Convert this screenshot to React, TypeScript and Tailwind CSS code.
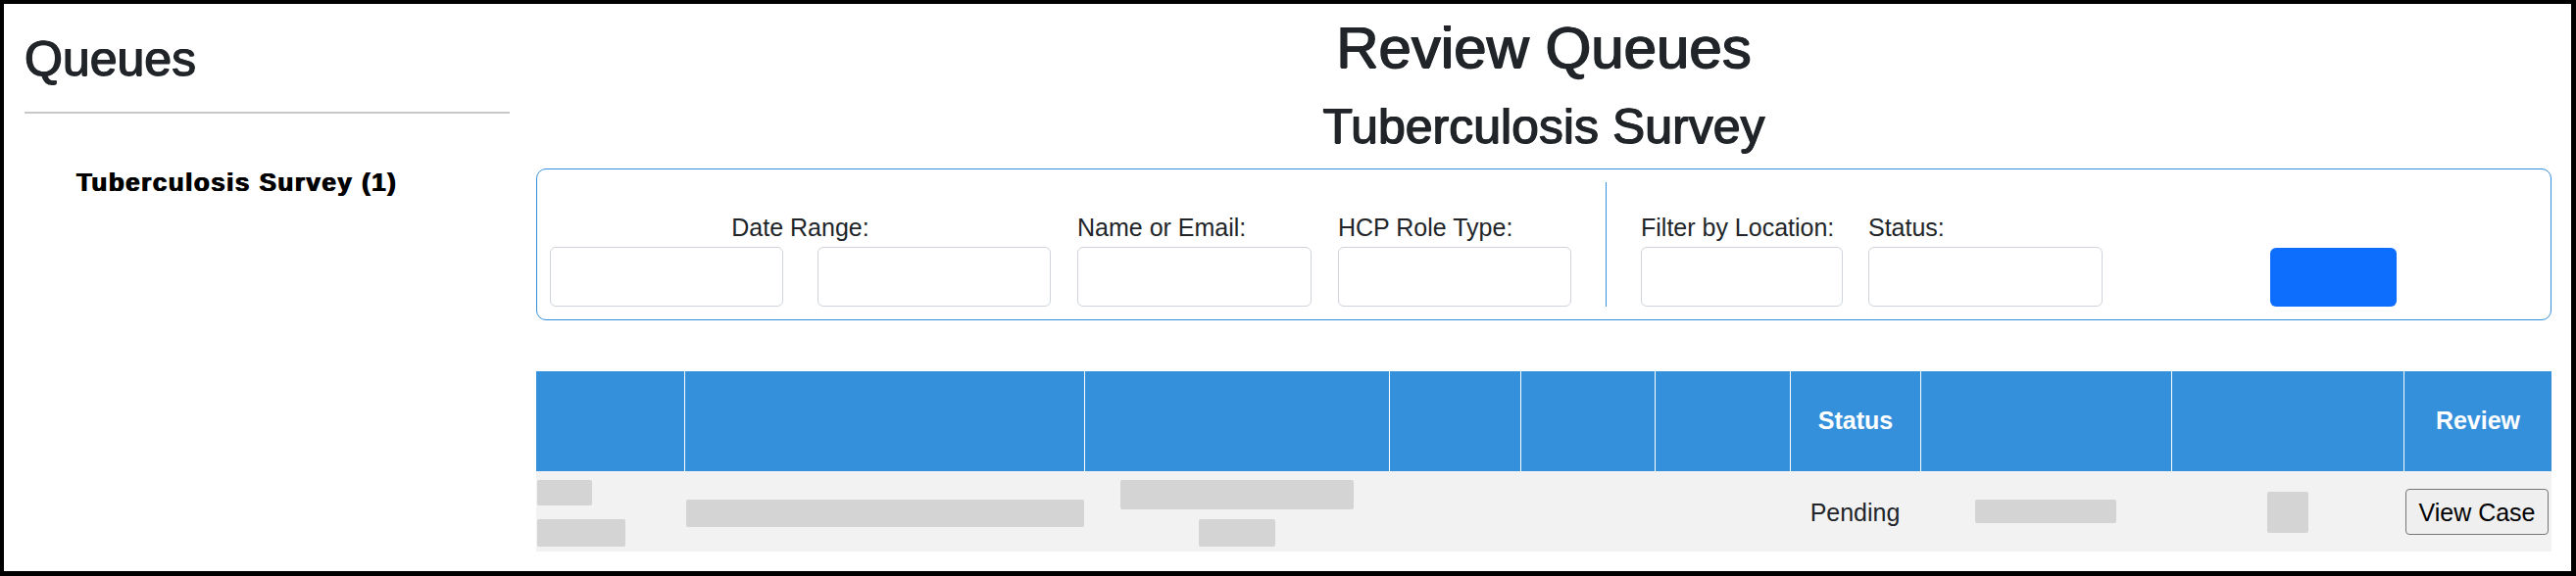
import React from "react";

const Bar = ({ w, h }: { w: string; h: string }) => (
  <div className={`${w} ${h} bg-[#d4d4d4] rounded-[2px]`} />
);

export default function App() {
  return (
    <div className="w-[2628px] h-[588px] bg-white border-black border-t-4 border-l-4 border-r-[5px] border-b-[5px] flex overflow-hidden font-['Liberation_Sans',Arial,sans-serif] text-[#212529]">
      {/* Sidebar */}
      <aside className="w-[522px] shrink-0 pl-[21px] pt-[26px]">
        <h3 className="text-[50px] leading-[60px] [text-shadow:0.7px_0_0_#212529,-0.7px_0_0_#212529,0_0.5px_0_#212529]">Queues</h3>
        <div className="mt-[24px] h-[2px] w-[495px] bg-[#c8c8c8]" />
        <div className="mt-[55px] ml-[53px] text-[26px] leading-[31px] font-bold tracking-[1.5px] text-black [text-shadow:0.6px_0_0_#000,-0.6px_0_0_#000]">
          Tuberculosis Survey (1)
        </div>
      </aside>

      {/* Main */}
      <main className="flex-1 pl-[21px] pr-[20px] pt-[9px]">
        <h1 className="text-center text-[60px] leading-[72px] [text-shadow:0.8px_0_0_#212529,-0.8px_0_0_#212529,0_0.5px_0_#212529]">Review Queues</h1>
        <h3 className="mt-[14px] text-center text-[50px] leading-[60px] [text-shadow:0.7px_0_0_#212529,-0.7px_0_0_#212529,0_0.5px_0_#212529]">Tuberculosis Survey</h3>

        {/* Filters */}
        <div className="mt-[13px] h-[155px] border border-[#3490dc] rounded-[10px] p-[13px] flex items-end text-[25px] leading-[30px]">
          <div className="flex flex-col">
            <label className="mb-[5px] text-center">Date Range:</label>
            <div className="flex gap-[35px]">
              <div className="w-[238px] h-[61px] border border-[#ced4da] rounded-[6px] bg-white" />
              <div className="w-[238px] h-[61px] border border-[#ced4da] rounded-[6px] bg-white" />
            </div>
          </div>
          <div className="ml-[27px] flex flex-col">
            <label className="mb-[5px]">Name or Email:</label>
            <div className="w-[239px] h-[61px] border border-[#ced4da] rounded-[6px] bg-white" />
          </div>
          <div className="ml-[27px] flex flex-col">
            <label className="mb-[5px]">HCP Role Type:</label>
            <div className="w-[238px] h-[61px] border border-[#ced4da] rounded-[6px] bg-white" />
          </div>
          <div className="self-stretch w-px mx-[35px] bg-[#3490dc]" />
          <div className="flex flex-col">
            <label className="mb-[5px] whitespace-nowrap">Filter by Location:</label>
            <div className="w-[206px] h-[61px] border border-[#ced4da] rounded-[6px] bg-white" />
          </div>
          <div className="ml-[26px] flex flex-col">
            <label className="mb-[5px]">Status:</label>
            <div className="w-[239px] h-[61px] border border-[#ced4da] rounded-[6px] bg-white" />
          </div>
          <button className="ml-[171px] w-[129px] h-[60px] bg-[#0d6efd] rounded-[6px]" />
        </div>

        {/* Table */}
        <div className="mt-[52px]">
          <div className="grid grid-cols-[151px_408px_311px_134px_137px_138px_133px_256px_237px_151px] h-[102px] bg-[#3590dc] text-white font-bold text-[25px]">
            <div />
            <div className="border-l border-white" />
            <div className="border-l border-white" />
            <div className="border-l border-white" />
            <div className="border-l border-white" />
            <div className="border-l border-white" />
            <div className="border-l border-white flex items-center justify-center">Status</div>
            <div className="border-l border-white" />
            <div className="border-l border-white" />
            <div className="border-l border-white flex items-center justify-center">Review</div>
          </div>
          <div className="grid grid-cols-[151px_408px_311px_134px_137px_138px_133px_256px_237px_151px] h-[82px] bg-[#f2f2f2] text-[25px] leading-[30px]">
            <div className="flex flex-col items-start pt-[9px] pl-px gap-[14px]">
              <Bar w="w-[56px]" h="h-[26px]" />
              <Bar w="w-[90px]" h="h-[28px]" />
            </div>
            <div className="pt-[29px] pl-[2px]">
              <Bar w="w-[406px]" h="h-[28px]" />
            </div>
            <div className="flex flex-col items-center pt-[9px] gap-[10px]">
              <Bar w="w-[238px]" h="h-[30px]" />
              <Bar w="w-[78px]" h="h-[28px]" />
            </div>
            <div />
            <div />
            <div />
            <div className="pt-[27px] text-center">Pending</div>
            <div className="flex justify-center pt-[29px]">
              <Bar w="w-[144px]" h="h-[24px]" />
            </div>
            <div className="flex justify-center pt-[21px]">
              <Bar w="w-[42px]" h="h-[42px]" />
            </div>
            <div className="pt-[18px] pl-[2px]">
              <button className="w-[146px] h-[47px] border border-[#767676] rounded-[4px] bg-[#efefef] text-black text-[25px] leading-[30px]">
                View Case
              </button>
            </div>
          </div>
        </div>
      </main>
    </div>
  );
}
